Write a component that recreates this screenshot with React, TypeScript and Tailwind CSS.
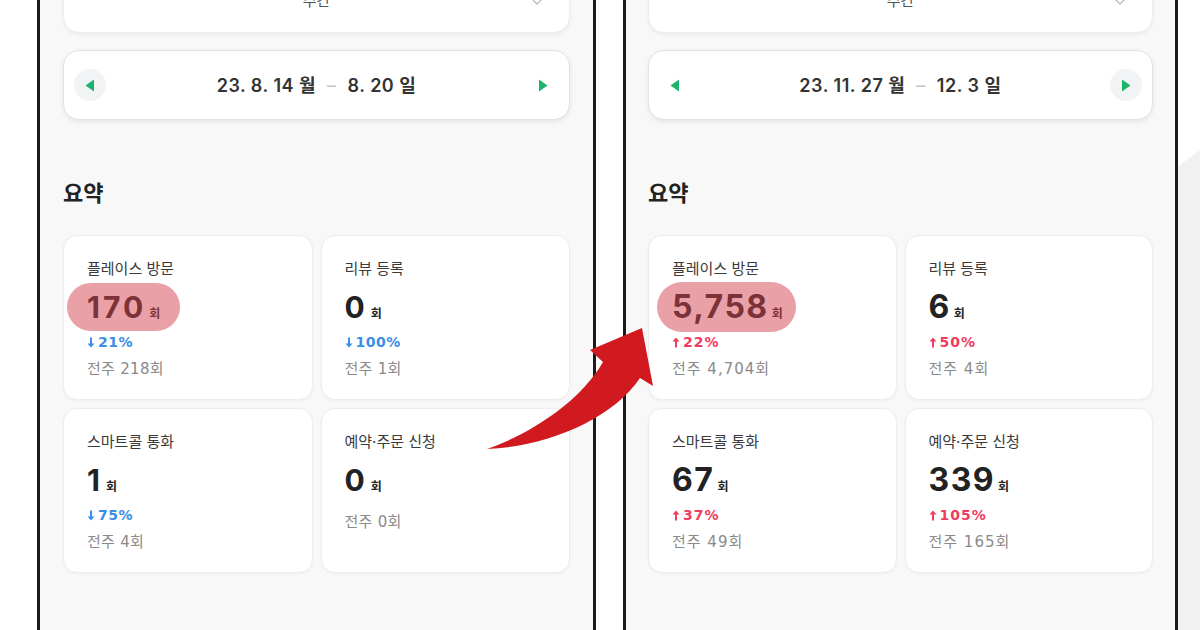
import { ChevronDown } from 'lucide-react';

type Stat = {
  label: string;
  value: string;
  pct?: { up: boolean; text: string };
  prev: string;
  pill?: string;
};

const leftStats: Stat[] = [
  { label: '플레이스 방문', value: '170', pct: { up: false, text: '21%' }, prev: '전주 218회', pill: '-left-5 -right-5 -top-[6px] -bottom-[6px]' },
  { label: '리뷰 등록', value: '0', pct: { up: false, text: '100%' }, prev: '전주 1회' },
  { label: '스마트콜 통화', value: '1', pct: { up: false, text: '75%' }, prev: '전주 4회' },
  { label: '예약·주문 신청', value: '0', prev: '전주 0회' },
];

const rightStats: Stat[] = [
  { label: '플레이스 방문', value: '5,758', pct: { up: true, text: '22%' }, prev: '전주 4,704회', pill: '-left-[15px] -right-[13px] -top-[7px] -bottom-[7px]' },
  { label: '리뷰 등록', value: '6', pct: { up: true, text: '50%' }, prev: '전주 4회' },
  { label: '스마트콜 통화', value: '67', pct: { up: true, text: '37%' }, prev: '전주 49회' },
  { label: '예약·주문 신청', value: '339', pct: { up: true, text: '105%' }, prev: '전주 165회' },
];

function Tri({ dir }: { dir: 'left' | 'right' }) {
  return (
    <svg width="10" height="13" viewBox="0 0 10 13">
      {dir === 'left' ? <path d="M9 0.5 L0.5 6.5 L9 12.5 Z" fill="#1bb46a" /> : <path d="M1 0.5 L9.5 6.5 L1 12.5 Z" fill="#1bb46a" />}
    </svg>
  );
}

function Arrow({ up }: { up: boolean }) {
  return (
    <svg width="8" height="11" viewBox="0 0 8 11" className="mr-[3px]">
      {up ? (
        <path d="M4 0.5 L7.5 4.5 H5 V10.5 H3 V4.5 H0.5 Z" fill="currentColor" />
      ) : (
        <path d="M4 10.5 L7.5 6.5 H5 V0.5 H3 V6.5 H0.5 Z" fill="currentColor" />
      )}
    </svg>
  );
}

const numFont = "font-['DejaVu_Sans','Noto_Sans_CJK_KR',sans-serif]";

function StatCard({ s, big }: { s: Stat; big: boolean }) {
  return (
    <div className="h-[165px] rounded-[14px] bg-white border border-[#ededef] shadow-[0_1px_3px_rgba(0,0,0,0.04)] pl-[23px] pt-[23px] flex flex-col">
      <div className="h-5 leading-5 text-[15px] text-[#3a3a3a]">{s.label}</div>
      <div className="mt-[10px] h-9 flex items-center">
        <span className="relative inline-flex items-baseline">
          <span className={big ? 'text-[32px] font-bold text-[#222] leading-9 tracking-[1.5px]' : 'text-[30px] font-bold text-[#222] leading-9 tracking-[3px]'}>{s.value}</span>
          <span className="ml-[3px] text-[12px] font-bold text-[#222]">회</span>
          {s.pill && <span className={`absolute rounded-full bg-[#d4424d]/50 ${s.pill}`} />}
        </span>
      </div>
      {s.pct && (
        <div
          className={`mt-2 h-[18px] flex items-center text-[14px] font-bold ${numFont} ${s.pct.up ? 'text-[#f03c60] tracking-[1px]' : 'text-[#3a8ee8] tracking-[0.5px]'}`}
        >
          <Arrow up={s.pct.up} />
          {s.pct.text}
        </div>
      )}
      <div
        className={`${s.pct ? 'mt-2' : 'mt-[14px]'} h-5 leading-5 text-[15px] text-[#8a8a8a] ${numFont} ${big ? 'tracking-[1px]' : 'tracking-[0.3px]'}`}
      >
        {s.prev}
      </div>
    </div>
  );
}

function Phone({
  frame, from, to, active, stats, big,
}: {
  frame: string;
  from: string;
  to: string;
  active: 'left' | 'right';
  stats: Stat[];
  big: boolean;
}) {
  return (
    <div className={frame}>
      <div className="-mt-[27px] h-[60px] rounded-[16px] bg-white border border-[#ededef] shadow-[0_2px_4px_rgba(0,0,0,0.05)] relative flex items-center justify-center">
        <span className="text-[15px] text-[#555] -mt-[4px]">주간</span>
        <ChevronDown size={16} className="absolute right-[24px] top-[20px] text-[#bbb]" />
      </div>
      <div className="mt-[17px] h-[70px] rounded-[16px] bg-white border border-[#e2e2e4] shadow-[0_2px_5px_rgba(0,0,0,0.08)] flex items-center justify-between px-[10px]">
        <div className={active === 'left' ? 'w-8 h-8 rounded-full bg-[#f2f3f4] flex items-center justify-center' : 'w-8 h-8 rounded-full flex items-center justify-center'}>
          <Tri dir="left" />
        </div>
        <div className="flex items-center text-[18px] font-semibold text-[#333] tracking-[0.5px]">
          <span>{from}</span>
          <span className="mx-[11px] text-[#c4c4c4] font-normal">–</span>
          <span>{to}</span>
        </div>
        <div className={active === 'right' ? 'w-8 h-8 rounded-full bg-[#f2f3f4] flex items-center justify-center' : 'w-8 h-8 rounded-full flex items-center justify-center'}>
          <Tri dir="right" />
        </div>
      </div>
      <h2 className="mt-[58px] h-[30px] leading-[30px] text-[22px] font-bold text-[#222]">요약</h2>
      <div className="mt-[27px] grid grid-cols-2 gap-2">
        {stats.map((s) => (
          <StatCard key={s.label} s={s} big={big} />
        ))}
      </div>
    </div>
  );
}

export default function App() {
  return (
    <div className="relative w-[1200px] h-[630px] overflow-hidden bg-white font-['Inter','Noto_Sans_CJK_KR',sans-serif]">
      <svg className="absolute inset-0 pointer-events-none" width="1200" height="630" viewBox="0 0 1200 630">
        <polygon points="1176,168 1200,150 1200,630 1176,630" fill="#f1f1f2" />
      </svg>
      <div className="relative flex items-start pl-[37px] gap-[27px] h-full">
        <Phone
          frame="w-[559px] h-[630px] shrink-0 border-x-[3px] border-[#1b1b1b] bg-[#f8f8f9] px-[23px] flex flex-col"
          from="23. 8. 14 월"
          to="8. 20 일"
          active="left"
          stats={leftStats}
          big={false}
        />
        <Phone
          frame="w-[555px] h-[630px] shrink-0 border-x-[3px] border-[#1b1b1b] bg-[#f8f8f9] px-[22px] flex flex-col"
          from="23. 11. 27 월"
          to="12. 3 일"
          active="right"
          stats={rightStats}
          big={true}
        />
      </div>
      <svg className="absolute inset-0 pointer-events-none" width="1200" height="630" viewBox="0 0 1200 630">
        <path
          d="M487 449 C530 434 580 402 603 362 L590 350 L642 328 L653 386 L640 378 C612 420 545 447 487 449 Z"
          fill="#d11a20"
        />
      </svg>
    </div>
  );
}
